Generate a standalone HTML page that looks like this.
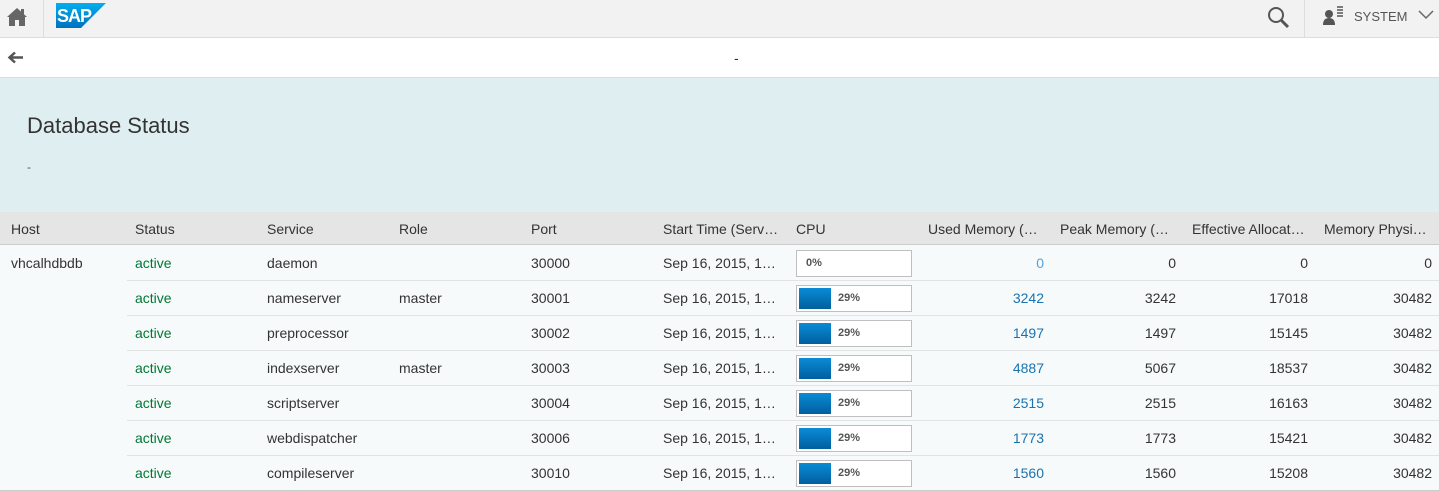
<!DOCTYPE html>
<html><head><meta charset="utf-8"><style>
*{margin:0;padding:0;box-sizing:border-box}
body{width:1439px;height:491px;overflow:hidden;font-family:"Liberation Sans",Arial,sans-serif;background:#f7fafb;color:#333;position:relative}
.top{position:absolute;left:0;top:0;width:1439px;height:38px;background:#f2f2f2;border-bottom:1px solid #ddd}
.nav{position:absolute;left:0;top:38px;width:1439px;height:40px;background:#fff;border-bottom:1px solid #ddd}
.hdr{position:absolute;left:0;top:78px;width:1439px;height:134px;background:#dfeff1}
.th{position:absolute;left:0;top:212px;width:1439px;height:33px;background:#e5e5e5;border-bottom:1px solid #ccc}
.c{position:absolute;font-size:14px;white-space:nowrap}
.r{text-align:right}
.g{color:#007833}
.b{color:#1a73b0}
.line{position:absolute;left:127px;width:1312px;height:1px;background:#e1e3e4}
.bar{position:absolute;left:796px;width:116px;height:27px;border:1px solid #bfbfbf;background:#fff}
.bar i{position:absolute;left:2px;top:2px;width:32px;height:21px;background:linear-gradient(#0a8bd6,#005f9e)}
.bar span{position:absolute;left:41px;top:6px;font-size:11px;font-weight:bold;color:#555}
</style></head><body>
<div class="top">
<svg style="position:absolute;left:6px;top:6px" width="22" height="22" viewBox="0 0 22 22"><path d="M11 2 L1 11 L3 11 L3 20 L9 20 L9 14 L13 14 L13 20 L19 20 L19 11 L21 11 Z" fill="#666"/><rect x="15" y="3" width="3" height="5" fill="#666"/></svg>
<div style="position:absolute;left:43px;top:0;width:1px;height:37px;background:#ddd"></div>
<svg style="position:absolute;left:56px;top:3px" width="50" height="25" viewBox="0 0 50 25"><defs><linearGradient id="s" x1="0" y1="0" x2="0" y2="1"><stop offset="0" stop-color="#00aeef"/><stop offset="1" stop-color="#0070c0"/></linearGradient></defs><path d="M0 0 H50 L25 25 H0 Z" fill="url(#s)"/><text x="1" y="19" font-family="Liberation Sans" font-weight="bold" font-size="18" fill="#fff" letter-spacing="-1">SAP</text></svg>
<svg style="position:absolute;left:1266px;top:5px" width="24" height="24" viewBox="0 0 24 24"><circle cx="10" cy="10" r="7" stroke="#555" stroke-width="2" fill="none"/><path d="M15 15 L22 22" stroke="#555" stroke-width="3"/></svg>
<div style="position:absolute;left:1304px;top:0;width:1px;height:37px;background:#ddd"></div>
<svg style="position:absolute;left:1322px;top:5px" width="24" height="22" viewBox="0 0 24 22"><circle cx="7" cy="9" r="4" fill="#555"/><path d="M1 20 Q1 13 7 13 Q13 13 13 20 Z" fill="#555"/><path d="M15 2h6M15 5h6M15 8h6M15 11h6" stroke="#555" stroke-width="1.5"/></svg>
<div class="c" style="left:1354px;top:9px;font-size:13px;color:#555">SYSTEM</div>
<svg style="position:absolute;left:1418px;top:10px" width="16" height="10" viewBox="0 0 16 10"><path d="M1 1 L8 8 L15 1" stroke="#666" stroke-width="1.5" fill="none"/></svg>
</div>
<div class="nav">
<svg style="position:absolute;left:7px;top:13px" width="17" height="13" viewBox="0 0 17 13"><path d="M16 6.5 H3 M8 1.5 L2.5 6.5 L8 11.5" stroke="#555" stroke-width="2.5" fill="none"/></svg>
<div class="c" style="left:734px;top:12px;color:#333">-</div>
</div>
<div class="hdr">
<div class="c" style="left:27px;top:35px;font-size:22px;color:#333">Database Status</div>
<div class="c" style="left:27px;top:82px;font-size:12px;color:#555">-</div>
</div>
<div class="th">
<div class="c" style="left:11px;top:9px">Host</div>
<div class="c" style="left:135px;top:9px">Status</div>
<div class="c" style="left:267px;top:9px">Service</div>
<div class="c" style="left:399px;top:9px">Role</div>
<div class="c" style="left:531px;top:9px">Port</div>
<div class="c" style="left:663px;top:9px">Start Time (Serv…</div>
<div class="c" style="left:796px;top:9px">CPU</div>
<div class="c" style="left:928px;top:9px">Used Memory (…</div>
<div class="c" style="left:1060px;top:9px">Peak Memory (…</div>
<div class="c" style="left:1192px;top:9px">Effective Allocat…</div>
<div class="c" style="left:1324px;top:9px">Memory Physi…</div>
</div>
<div class="c" style="left:11px;top:255px">vhcalhdbdb</div>
<div id="rows"></div>
<script>
var d=[["daemon","","30000",0,0,0,0,0],["nameserver","master","30001",29,3242,3242,17018,30482],["preprocessor","","30002",29,1497,1497,15145,30482],["indexserver","master","30003",29,4887,5067,18537,30482],["scriptserver","","30004",29,2515,2515,16163,30482],["webdispatcher","","30006",29,1773,1773,15421,30482],["compileserver","","30010",29,1560,1560,15208,30482]];
var h="";
d.forEach(function(r,i){var y=245+i*35;var t=y+10;
h+='<div class="c g" style="left:135px;top:'+t+'px">active</div>';
h+='<div class="c" style="left:267px;top:'+t+'px">'+r[0]+'</div>';
h+='<div class="c" style="left:399px;top:'+t+'px">'+r[1]+'</div>';
h+='<div class="c" style="left:531px;top:'+t+'px">'+r[2]+'</div>';
h+='<div class="c" style="left:663px;top:'+t+'px">Sep 16, 2015, 1…</div>';
h+='<div class="bar" style="top:'+(y+5)+'px">'+(r[3]?'<i></i><span>29%</span>':'<span style="left:9px">0%</span>')+'</div>';
h+='<div class="c r b" style="left:928px;width:116px;top:'+t+'px;'+(i==0?'color:#5b9fd1':'')+'">'+r[4]+'</div>';
h+='<div class="c r" style="left:1060px;width:116px;top:'+t+'px">'+r[5]+'</div>';
h+='<div class="c r" style="left:1192px;width:116px;top:'+t+'px">'+r[6]+'</div>';
h+='<div class="c r" style="left:1324px;width:108px;top:'+t+'px">'+r[7]+'</div>';
h+='<div class="line" style="top:'+(y+35)+'px;'+(i==6?'left:0;width:1439px;background:#ccc':'')+'"></div>';
});
document.getElementById("rows").innerHTML=h;
</script>
</body></html>
